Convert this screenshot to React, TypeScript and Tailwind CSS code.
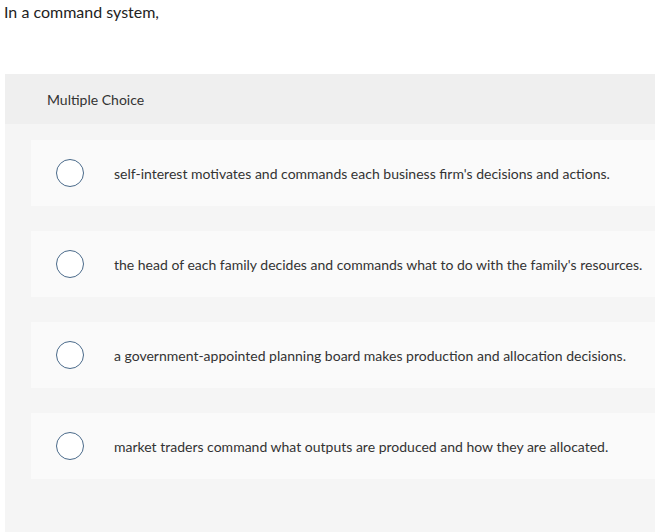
const options = [
  "self-interest motivates and commands each business firm's decisions and actions.",
  "the head of each family decides and commands what to do with the family's resources.",
  "a government-appointed planning board makes production and allocation decisions.",
  "market traders command what outputs are produced and how they are allocated.",
];

export default function App() {
  return (
    <div
      className="w-[655px] h-[532px] overflow-hidden bg-white text-[#333]"
      style={{ fontFamily: "Lato, 'Liberation Sans', sans-serif" }}
    >
      {/* question */}
      <p className="pl-[4px] pt-[2px] text-[16px] leading-[19px] text-[#222]">In a command system,</p>

      {/* answer panel */}
      <div className="mt-[53px] ml-[5px] w-[700px] h-[460px] bg-[#f5f5f5]">
        <div className="h-[50px] bg-[#efefef] flex items-center pl-[42px] text-[14px] text-[#333]">
          Multiple Choice
        </div>
        <div className="pt-[16px] pl-[26px] flex flex-col gap-[25px]">
          {options.map((opt) => (
            <div key={opt} className="h-[66px] bg-[#fafafa] flex items-center pl-[25px]">
              <span className="w-[28px] h-[28px] rounded-full border border-[#4a6a8a] bg-white shrink-0" />
              <span className="ml-[30px] pt-[1px] text-[14px] text-[#333]">{opt}</span>
            </div>
          ))}
        </div>
      </div>
    </div>
  );
}
